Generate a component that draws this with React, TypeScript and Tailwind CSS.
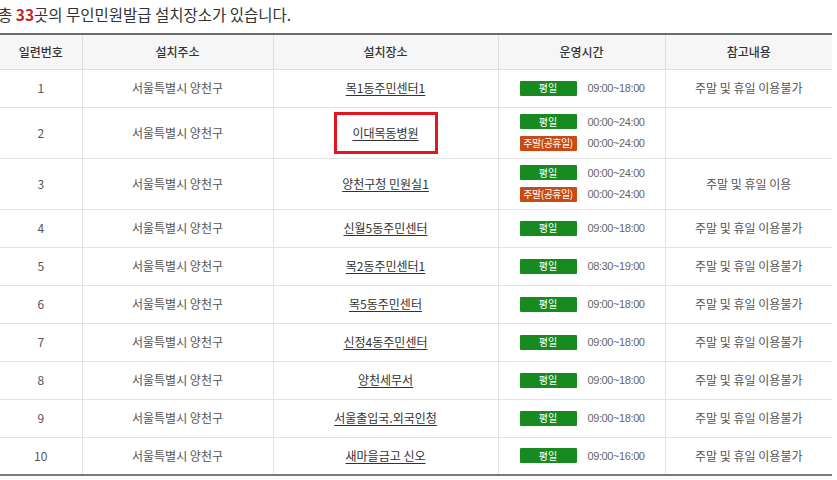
import React from "react";

type Row = {
  no: number;
  place: string;
  times: { kind: "weekday" | "weekend"; time: string }[];
  note: string;
  highlight?: boolean;
};

const rows: Row[] = [
  { no: 1, place: "목1동주민센터1", times: [{ kind: "weekday", time: "09:00~18:00" }], note: "주말 및 휴일 이용불가" },
  {
    no: 2,
    place: "이대목동병원",
    times: [
      { kind: "weekday", time: "00:00~24:00" },
      { kind: "weekend", time: "00:00~24:00" },
    ],
    note: "",
    highlight: true,
  },
  {
    no: 3,
    place: "양천구청 민원실1",
    times: [
      { kind: "weekday", time: "00:00~24:00" },
      { kind: "weekend", time: "00:00~24:00" },
    ],
    note: "주말 및 휴일 이용",
  },
  { no: 4, place: "신월5동주민센터", times: [{ kind: "weekday", time: "09:00~18:00" }], note: "주말 및 휴일 이용불가" },
  { no: 5, place: "목2동주민센터1", times: [{ kind: "weekday", time: "08:30~19:00" }], note: "주말 및 휴일 이용불가" },
  { no: 6, place: "목5동주민센터", times: [{ kind: "weekday", time: "09:00~18:00" }], note: "주말 및 휴일 이용불가" },
  { no: 7, place: "신정4동주민센터", times: [{ kind: "weekday", time: "09:00~18:00" }], note: "주말 및 휴일 이용불가" },
  { no: 8, place: "양천세무서", times: [{ kind: "weekday", time: "09:00~18:00" }], note: "주말 및 휴일 이용불가" },
  { no: 9, place: "서울출입국.외국인청", times: [{ kind: "weekday", time: "09:00~18:00" }], note: "주말 및 휴일 이용불가" },
  { no: 10, place: "새마을금고 신오", times: [{ kind: "weekday", time: "09:00~16:00" }], note: "주말 및 휴일 이용불가" },
];

const font = { fontFamily: '"Noto Sans CJK KR", "Noto Sans", sans-serif' };

function Badge({ kind }: { kind: "weekday" | "weekend" }) {
  if (kind === "weekday") {
    return (
      <span className="inline-flex h-[15px] w-[57px] items-center justify-center rounded-[1px] bg-[#178b1f] text-[10px] leading-none text-white">
        평일
      </span>
    );
  }
  return (
    <span className="inline-flex h-[15px] w-[57px] items-center justify-center rounded-[1px] bg-[#c94a12] text-[10px] leading-none tracking-[-0.5px] text-white">
      주말(공휴일)
    </span>
  );
}

export default function App() {
  return (
    <div className="h-[480px] w-[837px] overflow-hidden bg-white text-[#555]" style={font}>
      <div className="ml-[-2px] flex h-[33px] items-center pb-[4px] text-[15.5px] text-[#333]">
        <span>
          총 <span className="font-semibold text-[#c5262d]">33</span>곳의 무인민원발급 설치장소가 있습니다.
        </span>
      </div>
      <table className="w-[832px] table-fixed border-collapse border-t-2 border-b-2 border-t-[#6b6b6b] border-b-[#7a7a7a] text-[12px]">
        <colgroup>
          <col className="w-[82px]" />
          <col className="w-[191px]" />
          <col className="w-[225px]" />
          <col className="w-[167px]" />
          <col className="w-[167px]" />
        </colgroup>
        <thead>
          <tr className="h-[35px] bg-[#f6f6f6] text-[12px] font-medium text-[#333]">
            <th className="border-b border-[#dedede] font-medium">일련번호</th>
            <th className="border-b border-l border-[#dedede] font-medium">설치주소</th>
            <th className="border-b border-l border-[#dedede] font-medium">설치장소</th>
            <th className="border-b border-l border-[#dedede] font-medium">운영시간</th>
            <th className="border-b border-l border-[#dedede] font-medium">참고내용</th>
          </tr>
        </thead>
        <tbody>
          {rows.map((r) => (
            <tr key={r.no} className={r.times.length > 1 ? "h-[51px]" : "h-[38px]"}>
              <td className="border-b border-[#e3e3e3] text-center">{r.no}</td>
              <td className="border-b border-l border-[#e3e3e3] text-center">서울특별시 양천구</td>
              <td className="border-b border-l border-[#e3e3e3] text-center">
                {r.highlight ? (
                  <span className="inline-flex h-[42px] w-[104px] items-center justify-center border-[3px] border-[#e3151f]">
                    <span className="text-[#333] underline underline-offset-2">{r.place}</span>
                  </span>
                ) : (
                  <span className="text-[#333] underline underline-offset-2">{r.place}</span>
                )}
              </td>
              <td className="border-b border-l border-[#e3e3e3]">
                <div className="flex flex-col gap-[5px] pl-[21px]">
                  {r.times.map((t, i) => (
                    <div key={i} className="flex items-center gap-[11px]">
                      <Badge kind={t.kind} />
                      <span
                        className="text-[11px] tracking-[-0.4px] text-[#666]"
                        style={{ fontFamily: '"Liberation Sans", Arial, sans-serif' }}
                      >
                        {t.time}
                      </span>
                    </div>
                  ))}
                </div>
              </td>
              <td className="border-b border-l border-[#e3e3e3] text-center">{r.note}</td>
            </tr>
          ))}
        </tbody>
      </table>
    </div>
  );
}
